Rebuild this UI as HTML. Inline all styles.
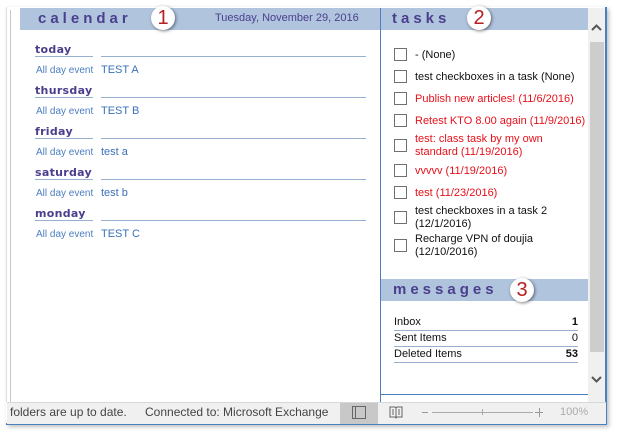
<!DOCTYPE html>
<html><head><style>
*{margin:0;padding:0;box-sizing:border-box}
body{width:617px;height:435px;background:#fff;position:relative;overflow:hidden;font-family:"Liberation Sans",sans-serif}
.abs{position:absolute}
.hdr{background:#b0c4de;height:22px}
.ttl{font-weight:bold;color:#4a3f8c;font-size:15px;letter-spacing:4px;font-family:"Liberation Sans",sans-serif}
.num{width:24px;height:24px;border-radius:50%;background:#fff;box-shadow:1px 1px 3px rgba(0,0,0,.5);color:#b52020;font-size:20px;text-align:center;line-height:24px}
.day{font-weight:bold;color:#4a3f8c;font-size:11px;letter-spacing:0.3px;font-family:"DejaVu Sans",sans-serif}
.ul{height:1px;background:#98b0d0}
.ev{font-size:10px;color:#4a7ec0}
.evt{font-size:11px;color:#3a70b8}
.cb{width:13px;height:13px;border:1px solid #707070;background:#fff}
.t{font-size:11px;color:#111;line-height:13px}
.r{color:#e8101a}
.m{font-size:11px;color:#111}
.st{font-size:12px;color:#444}
</style></head><body>
<div class="abs" style="left:6px;top:7px;width:601px;height:418px;border-right:2px solid #4a7fc0;border-bottom:2px solid #4a7fc0;box-shadow:2px 2px 4px rgba(0,0,0,.25)"></div>
<div class="abs" style="left:6px;top:7px;width:1px;height:395px;background:#e0e0e0"></div>
<div class="abs" style="left:10px;top:10px;width:1px;height:392px;background:#c8c8c8"></div>

<div class="abs hdr" style="left:20px;top:8px;width:360px"></div>
<div class="abs ttl" style="left:38px;top:10px">calendar</div>
<div class="abs num" style="left:151px;top:6px">1</div>
<div class="abs" style="left:215px;top:12px;font-size:11px;color:#4a3f8c">Tuesday, November 29, 2016</div>

<div class="abs day" style="left:35px;top:43px">today</div>
<div class="abs ul" style="left:35px;top:56px;width:58px"></div><div class="abs ul" style="left:101px;top:56px;width:265px"></div>
<div class="abs ev" style="left:36px;top:65px">All day event</div><div class="abs evt" style="left:101px;top:64px">TEST A</div>

<div class="abs day" style="left:35px;top:84px">thursday</div>
<div class="abs ul" style="left:35px;top:97px;width:58px"></div><div class="abs ul" style="left:101px;top:97px;width:265px"></div>
<div class="abs ev" style="left:36px;top:106px">All day event</div><div class="abs evt" style="left:101px;top:105px">TEST B</div>

<div class="abs day" style="left:35px;top:125px">friday</div>
<div class="abs ul" style="left:35px;top:138px;width:58px"></div><div class="abs ul" style="left:101px;top:138px;width:265px"></div>
<div class="abs ev" style="left:36px;top:147px">All day event</div><div class="abs evt" style="left:101px;top:146px">test a</div>

<div class="abs day" style="left:35px;top:166px">saturday</div>
<div class="abs ul" style="left:35px;top:179px;width:58px"></div><div class="abs ul" style="left:101px;top:179px;width:265px"></div>
<div class="abs ev" style="left:36px;top:188px">All day event</div><div class="abs evt" style="left:101px;top:187px">test b</div>

<div class="abs day" style="left:35px;top:207px">monday</div>
<div class="abs ul" style="left:35px;top:220px;width:58px"></div><div class="abs ul" style="left:101px;top:220px;width:265px"></div>
<div class="abs ev" style="left:36px;top:229px">All day event</div><div class="abs evt" style="left:101px;top:228px">TEST C</div>

<div class="abs" style="left:380px;top:8px;width:1px;height:394px;background:#4a7fc0"></div>
<div class="abs hdr" style="left:381px;top:8px;width:207px"></div>
<div class="abs ttl" style="left:392px;top:10px">tasks</div>
<div class="abs num" style="left:467px;top:6px">2</div>

<div class="abs cb" style="left:394px;top:48px"></div><div class="abs t" style="left:415px;top:49px">- (None)</div>
<div class="abs cb" style="left:394px;top:70px"></div><div class="abs t" style="left:415px;top:71px">test checkboxes in a task (None)</div>
<div class="abs cb" style="left:394px;top:92px"></div><div class="abs t r" style="left:415px;top:93px">Publish new articles! (11/6/2016)</div>
<div class="abs cb" style="left:394px;top:114px"></div><div class="abs t r" style="left:415px;top:115px">Retest KTO 8.00 again (11/9/2016)</div>
<div class="abs cb" style="left:394px;top:139px"></div><div class="abs t r" style="left:415px;top:133px">test: class task by my own<br>standard (11/19/2016)</div>
<div class="abs cb" style="left:394px;top:164px"></div><div class="abs t r" style="left:415px;top:165px">vvvvv (11/19/2016)</div>
<div class="abs cb" style="left:394px;top:186px"></div><div class="abs t r" style="left:415px;top:187px">test (11/23/2016)</div>
<div class="abs cb" style="left:394px;top:211px"></div><div class="abs t" style="left:415px;top:205px">test checkboxes in a task 2<br>(12/1/2016)</div>
<div class="abs cb" style="left:394px;top:239px"></div><div class="abs t" style="left:415px;top:233px">Recharge VPN of doujia<br>(12/10/2016)</div>

<div class="abs hdr" style="left:381px;top:279px;width:207px"></div>
<div class="abs ttl" style="left:393px;top:281px">messages</div>
<div class="abs num" style="left:510px;top:278px">3</div>
<div class="abs m" style="left:394px;top:316px">Inbox</div><div class="abs m" style="left:560px;top:316px;width:18px;text-align:right;font-weight:bold">1</div>
<div class="abs ul" style="left:394px;top:330px;width:184px"></div>
<div class="abs m" style="left:394px;top:332px">Sent Items</div><div class="abs m" style="left:560px;top:332px;width:18px;text-align:right">0</div>
<div class="abs ul" style="left:394px;top:346px;width:184px"></div>
<div class="abs m" style="left:394px;top:348px">Deleted Items</div><div class="abs m" style="left:555px;top:348px;width:23px;text-align:right;font-weight:bold">53</div>
<div class="abs ul" style="left:394px;top:362px;width:184px"></div>
<div class="abs" style="left:380px;top:394px;width:208px;height:1px;background:#4a7fc0"></div>

<div class="abs" style="left:588px;top:8px;width:17px;height:394px;background:#f0f0f0"></div>
<div class="abs" style="left:590px;top:42px;width:14px;height:310px;background:#cdcdcd"></div>
<svg class="abs" style="left:589px;top:22px" width="15" height="12"><path d="M3 8 L7.5 3.5 L12 8" stroke="#555" stroke-width="2" fill="none"/></svg>
<svg class="abs" style="left:589px;top:374px" width="15" height="12"><path d="M3 3 L7.5 7.5 L12 3" stroke="#555" stroke-width="2" fill="none"/></svg>

<div class="abs" style="left:7px;top:402px;width:599px;height:22px;background:#f0f0f0;border-top:1px solid #d8d8d8"></div>
<div class="abs st" style="left:10px;top:405px">folders are up to date.</div>
<div class="abs st" style="left:145px;top:405px">Connected to: Microsoft Exchange</div>
<div class="abs" style="left:340px;top:403px;width:38px;height:21px;background:#c8c8c8"></div>
<div class="abs" style="left:352px;top:406px;width:14px;height:13px;border:1px solid #666"></div>
<div class="abs" style="left:355px;top:406px;width:1px;height:13px;background:#666"></div>
<svg class="abs" style="left:389px;top:405px" width="14" height="14"><path d="M1 2h5l1 1 1-1h5v10H8l-1 1-1-1H1z M7 3v9 M3 5h2M3 7h2M3 9h2M9 5h2M9 7h2M9 9h2" stroke="#666" fill="none"/></svg>
<div class="abs" style="left:422px;top:412px;width:6px;height:1px;background:#999"></div>
<div class="abs" style="left:432px;top:412px;width:101px;height:1px;background:#aaa"></div>
<div class="abs" style="left:482px;top:409px;width:1px;height:6px;background:#aaa"></div>
<div class="abs" style="left:535px;top:412px;width:8px;height:1px;background:#999"></div>
<div class="abs" style="left:539px;top:408px;width:1px;height:9px;background:#999"></div>
<div class="abs" style="left:560px;top:406px;font-size:11px;color:#aaa">100%</div>
</body></html>
